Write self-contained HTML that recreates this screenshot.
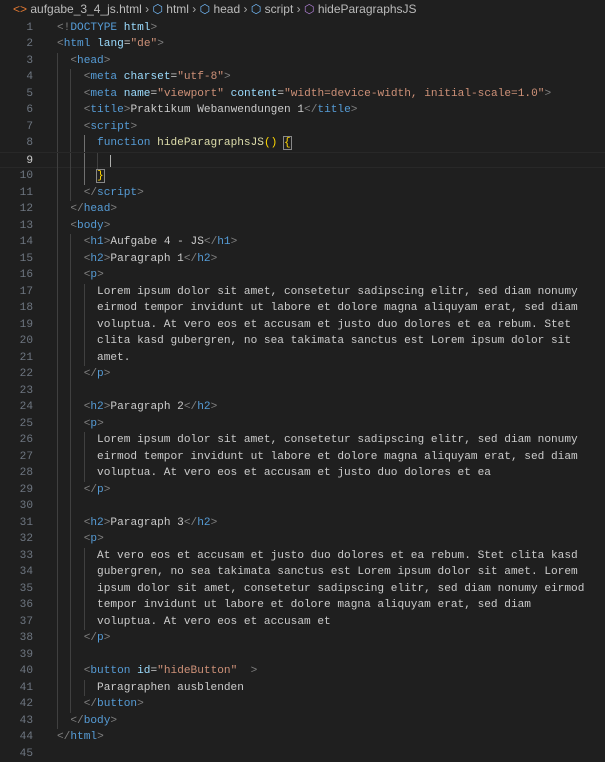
<!DOCTYPE html>
<html><head><meta charset="utf-8"><style>
body{margin:0;width:605px;height:750px;background:#1f1f1f;overflow:hidden;font-family:"Liberation Mono",monospace;font-size:11.13px;color:#cccccc}
.bc{height:18px;line-height:18px;font-family:"Liberation Sans",sans-serif;font-size:12px;color:#bbbbbb;padding-left:13px;white-space:pre}
.bc .a{color:#a9a9a9}
.ed{position:absolute;top:19.5px;left:0;right:0}
.l{height:16.5px;line-height:16.5px;white-space:pre;position:relative}
.n{position:absolute;left:0;width:33px;text-align:right;color:#6e7681}
.c{position:absolute;left:57px}
.g{display:inline-block;width:2ch;height:16.5px;vertical-align:top;box-shadow:inset 1px 0 0 #404040}
.ga{box-shadow:inset 1px 0 0 #707070}
.cur{background:#1f1f1f;border-top:1px solid #282828;border-bottom:1px solid #282828;box-sizing:border-box}
.cur .n{color:#cccccc}
.p{color:#808080}.t{color:#569cd6}.at{color:#9cdcfe}.s{color:#ce9178}.k{color:#569cd6}.f{color:#dcdcaa}.y{color:#ffd700}
.bx{outline:1px solid #888;}
</style></head><body>
<div class="bc"><span style="color:#e37933">&lt;&gt;</span> aufgabe_3_4_js.html <span class="a">›</span> <span style="color:#75beff">⬡</span> html <span class="a">›</span> <span style="color:#75beff">⬡</span> head <span class="a">›</span> <span style="color:#75beff">⬡</span> script <span class="a">›</span> <span style="color:#b180d7">⬡</span> hideParagraphsJS</div>
<div class="ed">
<div class="l"><span class="n">1</span><span class="c"><span class="p">&lt;!</span><span class="t">DOCTYPE</span> <span class="at">html</span><span class="p">&gt;</span></span></div>
<div class="l"><span class="n">2</span><span class="c"><span class="p">&lt;</span><span class="t">html</span> <span class="at">lang</span>=<span class="s">"de"</span><span class="p">&gt;</span></span></div>
<div class="l"><span class="n">3</span><span class="c"><span class="g"></span><span class="p">&lt;</span><span class="t">head</span><span class="p">&gt;</span></span></div>
<div class="l"><span class="n">4</span><span class="c"><span class="g"></span><span class="g"></span><span class="p">&lt;</span><span class="t">meta</span> <span class="at">charset</span>=<span class="s">"utf-8"</span><span class="p">&gt;</span></span></div>
<div class="l"><span class="n">5</span><span class="c"><span class="g"></span><span class="g"></span><span class="p">&lt;</span><span class="t">meta</span> <span class="at">name</span>=<span class="s">"viewport"</span> <span class="at">content</span>=<span class="s">"width=device-width, initial-scale=1.0"</span><span class="p">&gt;</span></span></div>
<div class="l"><span class="n">6</span><span class="c"><span class="g"></span><span class="g"></span><span class="p">&lt;</span><span class="t">title</span><span class="p">&gt;</span>Praktikum Webanwendungen 1<span class="p">&lt;/</span><span class="t">title</span><span class="p">&gt;</span></span></div>
<div class="l"><span class="n">7</span><span class="c"><span class="g"></span><span class="g"></span><span class="p">&lt;</span><span class="t">script</span><span class="p">&gt;</span></span></div>
<div class="l"><span class="n">8</span><span class="c"><span class="g"></span><span class="g"></span><span class="g ga"></span><span class="k">function</span> <span class="f">hideParagraphsJS</span><span class="y">()</span> <span class="y bx">{</span></span></div>
<div class="l cur"><span class="n">9</span><span class="c"><span class="g"></span><span class="g"></span><span class="g ga"></span><span class="g"></span><span style="border-left:1px solid #aeafad"></span></span></div>
<div class="l"><span class="n">10</span><span class="c"><span class="g"></span><span class="g"></span><span class="g ga"></span><span class="y bx">}</span></span></div>
<div class="l"><span class="n">11</span><span class="c"><span class="g"></span><span class="g"></span><span class="p">&lt;/</span><span class="t">script</span><span class="p">&gt;</span></span></div>
<div class="l"><span class="n">12</span><span class="c"><span class="g"></span><span class="p">&lt;/</span><span class="t">head</span><span class="p">&gt;</span></span></div>
<div class="l"><span class="n">13</span><span class="c"><span class="g"></span><span class="p">&lt;</span><span class="t">body</span><span class="p">&gt;</span></span></div>
<div class="l"><span class="n">14</span><span class="c"><span class="g"></span><span class="g"></span><span class="p">&lt;</span><span class="t">h1</span><span class="p">&gt;</span>Aufgabe 4 - JS<span class="p">&lt;/</span><span class="t">h1</span><span class="p">&gt;</span></span></div>
<div class="l"><span class="n">15</span><span class="c"><span class="g"></span><span class="g"></span><span class="p">&lt;</span><span class="t">h2</span><span class="p">&gt;</span>Paragraph 1<span class="p">&lt;/</span><span class="t">h2</span><span class="p">&gt;</span></span></div>
<div class="l"><span class="n">16</span><span class="c"><span class="g"></span><span class="g"></span><span class="p">&lt;</span><span class="t">p</span><span class="p">&gt;</span></span></div>
<div class="l"><span class="n">17</span><span class="c"><span class="g"></span><span class="g"></span><span class="g"></span>Lorem ipsum dolor sit amet, consetetur sadipscing elitr, sed diam nonumy</span></div>
<div class="l"><span class="n">18</span><span class="c"><span class="g"></span><span class="g"></span><span class="g"></span>eirmod tempor invidunt ut labore et dolore magna aliquyam erat, sed diam</span></div>
<div class="l"><span class="n">19</span><span class="c"><span class="g"></span><span class="g"></span><span class="g"></span>voluptua. At vero eos et accusam et justo duo dolores et ea rebum. Stet</span></div>
<div class="l"><span class="n">20</span><span class="c"><span class="g"></span><span class="g"></span><span class="g"></span>clita kasd gubergren, no sea takimata sanctus est Lorem ipsum dolor sit</span></div>
<div class="l"><span class="n">21</span><span class="c"><span class="g"></span><span class="g"></span><span class="g"></span>amet.</span></div>
<div class="l"><span class="n">22</span><span class="c"><span class="g"></span><span class="g"></span><span class="p">&lt;/</span><span class="t">p</span><span class="p">&gt;</span></span></div>
<div class="l"><span class="n">23</span><span class="c"><span class="g"></span><span class="g"></span></span></div>
<div class="l"><span class="n">24</span><span class="c"><span class="g"></span><span class="g"></span><span class="p">&lt;</span><span class="t">h2</span><span class="p">&gt;</span>Paragraph 2<span class="p">&lt;/</span><span class="t">h2</span><span class="p">&gt;</span></span></div>
<div class="l"><span class="n">25</span><span class="c"><span class="g"></span><span class="g"></span><span class="p">&lt;</span><span class="t">p</span><span class="p">&gt;</span></span></div>
<div class="l"><span class="n">26</span><span class="c"><span class="g"></span><span class="g"></span><span class="g"></span>Lorem ipsum dolor sit amet, consetetur sadipscing elitr, sed diam nonumy</span></div>
<div class="l"><span class="n">27</span><span class="c"><span class="g"></span><span class="g"></span><span class="g"></span>eirmod tempor invidunt ut labore et dolore magna aliquyam erat, sed diam</span></div>
<div class="l"><span class="n">28</span><span class="c"><span class="g"></span><span class="g"></span><span class="g"></span>voluptua. At vero eos et accusam et justo duo dolores et ea</span></div>
<div class="l"><span class="n">29</span><span class="c"><span class="g"></span><span class="g"></span><span class="p">&lt;/</span><span class="t">p</span><span class="p">&gt;</span></span></div>
<div class="l"><span class="n">30</span><span class="c"><span class="g"></span><span class="g"></span></span></div>
<div class="l"><span class="n">31</span><span class="c"><span class="g"></span><span class="g"></span><span class="p">&lt;</span><span class="t">h2</span><span class="p">&gt;</span>Paragraph 3<span class="p">&lt;/</span><span class="t">h2</span><span class="p">&gt;</span></span></div>
<div class="l"><span class="n">32</span><span class="c"><span class="g"></span><span class="g"></span><span class="p">&lt;</span><span class="t">p</span><span class="p">&gt;</span></span></div>
<div class="l"><span class="n">33</span><span class="c"><span class="g"></span><span class="g"></span><span class="g"></span>At vero eos et accusam et justo duo dolores et ea rebum. Stet clita kasd</span></div>
<div class="l"><span class="n">34</span><span class="c"><span class="g"></span><span class="g"></span><span class="g"></span>gubergren, no sea takimata sanctus est Lorem ipsum dolor sit amet. Lorem</span></div>
<div class="l"><span class="n">35</span><span class="c"><span class="g"></span><span class="g"></span><span class="g"></span>ipsum dolor sit amet, consetetur sadipscing elitr, sed diam nonumy eirmod</span></div>
<div class="l"><span class="n">36</span><span class="c"><span class="g"></span><span class="g"></span><span class="g"></span>tempor invidunt ut labore et dolore magna aliquyam erat, sed diam</span></div>
<div class="l"><span class="n">37</span><span class="c"><span class="g"></span><span class="g"></span><span class="g"></span>voluptua. At vero eos et accusam et</span></div>
<div class="l"><span class="n">38</span><span class="c"><span class="g"></span><span class="g"></span><span class="p">&lt;/</span><span class="t">p</span><span class="p">&gt;</span></span></div>
<div class="l"><span class="n">39</span><span class="c"><span class="g"></span><span class="g"></span></span></div>
<div class="l"><span class="n">40</span><span class="c"><span class="g"></span><span class="g"></span><span class="p">&lt;</span><span class="t">button</span> <span class="at">id</span>=<span class="s">"hideButton"</span>  <span class="p">&gt;</span></span></div>
<div class="l"><span class="n">41</span><span class="c"><span class="g"></span><span class="g"></span><span class="g"></span>Paragraphen ausblenden</span></div>
<div class="l"><span class="n">42</span><span class="c"><span class="g"></span><span class="g"></span><span class="p">&lt;/</span><span class="t">button</span><span class="p">&gt;</span></span></div>
<div class="l"><span class="n">43</span><span class="c"><span class="g"></span><span class="p">&lt;/</span><span class="t">body</span><span class="p">&gt;</span></span></div>
<div class="l"><span class="n">44</span><span class="c"><span class="p">&lt;/</span><span class="t">html</span><span class="p">&gt;</span></span></div>
<div class="l"><span class="n">45</span><span class="c"></span></div>
</div>
</body></html>
